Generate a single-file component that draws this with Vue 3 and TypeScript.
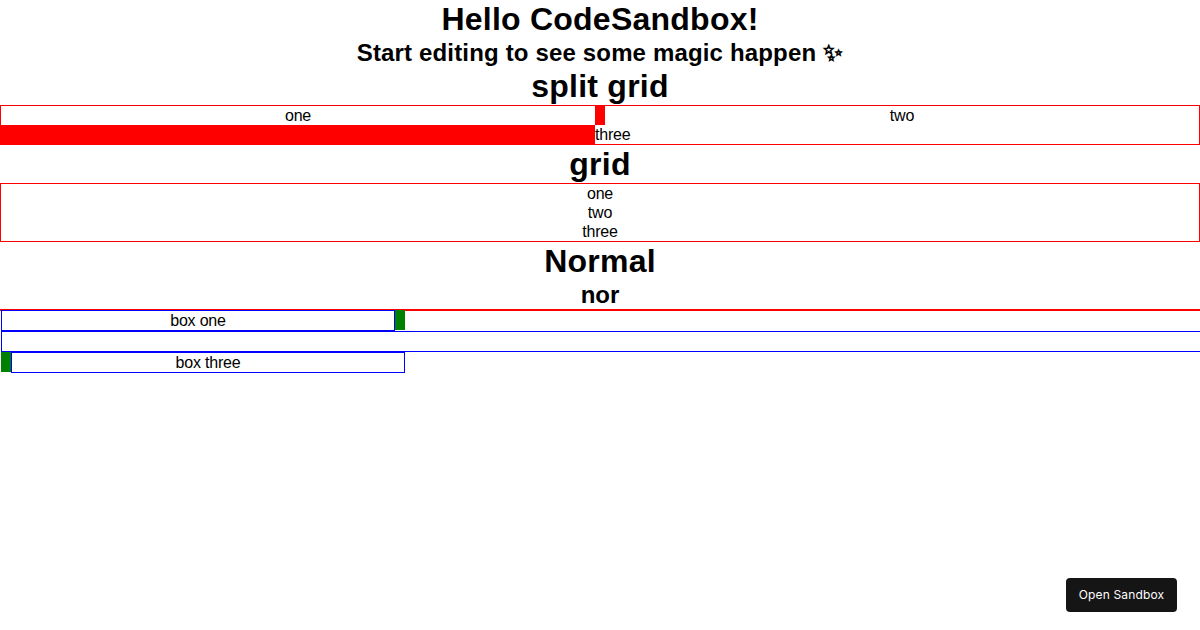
<script setup lang="ts">
const title: string = 'Hello CodeSandbox!'
</script>

<template>
  <div class="page">
    <h1 class="hello">{{ title }}</h1>
    <h2 class="sub">Start editing to see some magic happen <span class="spark">✨</span></h2>
    <h1>split grid</h1>
    <div class="split">
      <div>one</div>
      <div class="gutter"></div>
      <div>two</div>
      <div class="gutter"></div>
      <div class="three">three</div>
    </div>
    <h1 class="tall">grid</h1>
    <div class="plain">
      <div>one</div>
      <div>two</div>
      <div>three</div>
    </div>
    <h1 class="hello">Normal</h1>
    <h2 class="nor">nor</h2>
    <div class="normal">
      <div class="row">
        <div class="box first">box one</div>
        <div class="bar"></div>
      </div>
      <div class="box wide"></div>
      <div class="row">
        <div class="bar"></div>
        <div class="box third">box three</div>
      </div>
    </div>
    <button class="open" type="button">Open Sandbox</button>
  </div>
</template>

<style>
html, body { margin: 0; background: #fff; }
</style>

<style scoped>
.page {
  position: relative;
  width: 1200px;
  height: 630px;
  overflow: hidden;
  font-family: "Liberation Sans", Arial, sans-serif;
  font-size: 16px;
  line-height: 19px;
  letter-spacing: -0.2px;
  text-align: center;
  color: #000;
}
h1, h2 { margin: 0; font-weight: bold; }
h1 { font-size: 32px; line-height: 37px; letter-spacing: 0.24px; }
.hello { line-height: 39px; }
.tall { padding-top: 1px; }
h2 { font-size: 24px; }
.sub { line-height: 27px; padding-bottom: 2px; letter-spacing: 0.16px; }
.nor { line-height: 28px; letter-spacing: 0; }
.spark { font-family: "DejaVu Sans", sans-serif; font-variant-emoji: text; line-height: 0; }
.split {
  display: grid;
  grid-template-columns: 1fr 10px 1fr;
  border: 1px solid #f00;
}
.gutter { background: #f00; }
.three { text-align: left; white-space: nowrap; grid-column: 2 / 3; }
.plain { border: 1px solid #f00; }
.normal {
  border: 1px solid #f00;
  height: 0;
}
.row { display: flex; }
.box { border: 1px solid #00f; box-sizing: border-box; height: 21px; }
.first { width: 394px; }
.third { width: 394px; }
.wide { width: 1300px; }
.bar { width: 10px; height: 20px; background: #008000; }
.open {
  position: absolute;
  left: 1066px;
  top: 578px;
  width: 111px;
  height: 34px;
  padding: 0 0 2px;
  border: 0;
  border-radius: 4px;
  background: #151515;
  color: #fff;
  font-family: Inter, sans-serif;
  font-size: 12px;
  letter-spacing: 0.15px;
}
</style>
